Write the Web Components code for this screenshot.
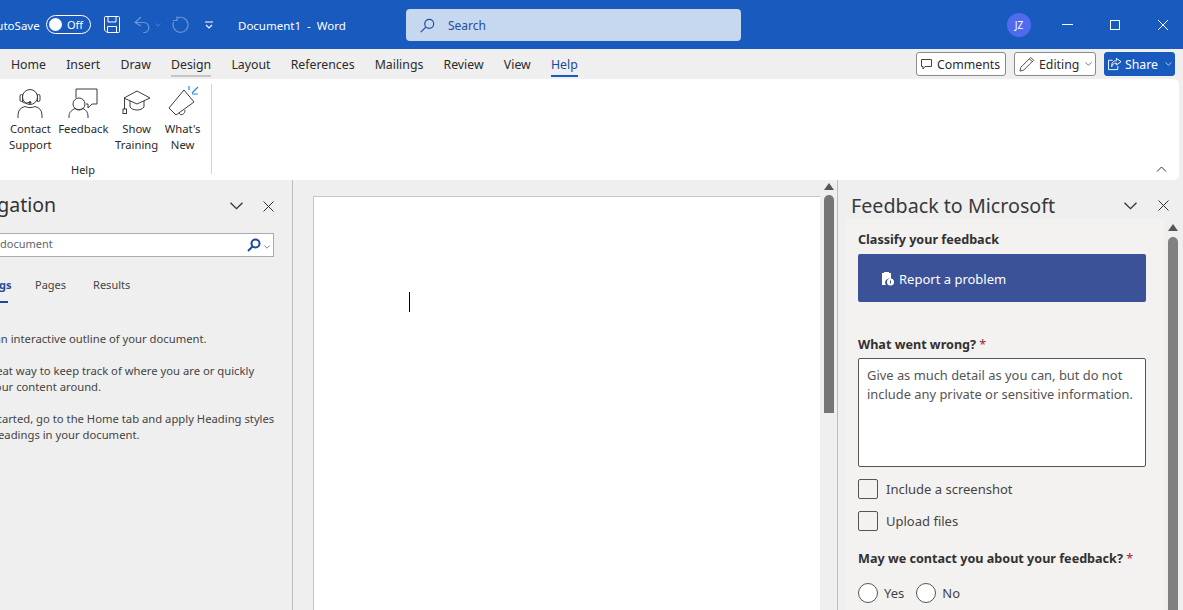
<!DOCTYPE html>
<html lang="en">
<head>
<meta charset="utf-8">
<title>Document1 - Word</title>
<style>
html, body { margin: 0; height: 610px; overflow: hidden; background: #efefef; }
body { font: 12.5px "Noto Sans", "Open Sans", sans-serif; color: #333; display: flex; flex-direction: column; }
</style>
</head>
<body>
<word-titlebar></word-titlebar>
<word-tabs></word-tabs>
<word-ribbon></word-ribbon>
<word-workspace>
  <nav-pane slot="nav"></nav-pane>
  <doc-area slot="doc"></doc-area>
  <feedback-pane slot="feedback"></feedback-pane>
</word-workspace>
<script>
// small helper so every component gets an open shadow root
class Base extends HTMLElement {
  render(html) {
    this.attachShadow({ mode: 'open' }).innerHTML = html;
  }
}

const chevron = (w, h, color) => `<svg width="${w}" height="${h}" viewBox="0 0 10 6" fill="none" stroke="${color}" stroke-width="1"><path d="M.5.5 5 5 9.500.5"/></svg>`;
const cross = `<svg width="11" height="11" viewBox="0 0 11 11" fill="none" stroke="#333" stroke-width="1"><path d="M.5.5l10 10M10.500.5l-10 10"/></svg>`;

class WordTitlebar extends Base {
  connectedCallback() {
    this.render(`<style>
      :host { display: flex; align-items: center; height: 49px; background: #185abd; color: #fff; font-size: 11.500px; flex: none; box-sizing: border-box; white-space: nowrap; }
      .auto { margin-left: -11px; width: 50px; padding-top: 1px; }
      .toggle { width: 41px; height: 17px; border: 1px solid #fff; border-radius: 10px; display: flex; align-items: center; gap: 5px; padding-left: 2px; box-sizing: content-box; margin-left: 7px; font-size: 11px; }
      .toggle i { width: 13px; height: 13px; border-radius: 50%; background: #fff; }
      .qat { display: flex; align-items: center; margin-left: 13px; }
      .doc { margin-left: 24px; width: 168px; padding-top: 1px; }
      .search { width: 335px; height: 32px; background: #c6d7f0; border-radius: 4px; display: flex; align-items: center; color: #1f4e9c; font-size: 12px; box-sizing: border-box; padding: 1px 0 0 14px; gap: 12px; }
      .right { margin-left: auto; display: flex; align-items: center; }
      .avatar { width: 24px; height: 24px; border-radius: 50%; background: #4f6bed; display: flex; align-items: center; justify-content: center; font-size: 10px; }
    </style>
    <span class="auto">AutoSave</span>
    <span class="toggle"><i></i>Off</span>
    <span class="qat">
      <svg width="16" height="17" viewBox="0 0 16 17" fill="none" stroke="#fff"><path d="M.5 1.500a1 1 0 0 1 1-1h13a1 1 0 0 1 1 1v14a1 1 0 0 1-1 1H3l-2.500-2.500zM4 .5v5.500h8V.5M3.500 16.500v-6h9v6"/></svg>
      <svg style="margin-left:14px" width="16" height="17" viewBox="0 0 16 17" fill="none" stroke="#6a95d8" stroke-width="1.200"><path d="M7 1 1 6.500 7 10M1 6.500H9.500a5.200 5.200 0 0 1 3 9.500L9 17"/></svg>
      <span style="margin-left:5px;display:flex">${chevron(6, 4, '#7ea3dc')}</span>
      <svg style="margin-left:11px" width="17" height="17" viewBox="0 0 17 17" fill="none" stroke="#6a95d8" stroke-width="1.200"><path d="M5 2.200A7.500 7.500 0 1 1 1.600 6M5 .5v4H1"/></svg>
      <svg style="margin-left:15px" width="10" height="8" viewBox="0 0 10 8" fill="none" stroke="#fff" stroke-width="1.100"><path d="M1 1h8M2 4l3 3 3-3"/></svg>
    </span>
    <span class="doc">Document1&nbsp; -&nbsp; Word</span>
    <span class="search">
      <svg width="15" height="15" viewBox="0 0 15 15" fill="none" stroke="#1f4e9c" stroke-width="1.200"><circle cx="9.200" cy="5.800" r="4.500"/><path d="M5.800 9.200.8 14.200"/></svg>
      <span style="margin-left:1px">Search</span>
    </span>
    <span class="right">
      <span class="avatar">JZ</span>
      <svg style="margin-left:31px" width="11" height="1"><rect width="11" height="1" fill="#fff"/></svg>
      <svg style="margin-left:37px" width="10" height="10" fill="none" stroke="#fff"><rect x=".5" y=".5" width="9" height="9"/></svg>
      <svg style="margin-left:38px;margin-right:15px" width="10" height="10" viewBox="0 0 10 10" fill="none" stroke="#fff"><path d="M0 0l10 10M10 0 0 10"/></svg>
    </span>`);
  }
}

class WordTabs extends Base {
  connectedCallback() {
    const tabs = ['Home', 'Insert', 'Draw', 'Design', 'Layout', 'References', 'Mailings', 'Review', 'View', 'Help'];
    this.render(`<style>
      :host { display: flex; align-items: center; height: 30px; flex: none; padding: 0 8px 0 11px; font-size: 12.300px; color: #2b2b2b; white-space: nowrap; }
      .tabs { display: flex; gap: 20.200px; padding-top: 1px; }
      .tab { position: relative; padding: 0 0 1px; }
      .tab.hover::after, .tab.on::after { content: ''; position: absolute; left: 0; right: 0; bottom: -3px; height: 2px; background: #c6c6c6; }
      .tab.on { color: #1a4a9a; }
      .tab.on::after { background: #185abd; }
      .acts { margin-left: auto; display: flex; gap: 8px; }
      .btn { height: 24px; box-sizing: border-box; border: 1px solid #8a8a8a; border-radius: 3px; background: #fff; display: flex; align-items: center; gap: 4px; padding: 0 0 0 4px; }
      .btn svg { flex: none; }
      .btn.share { background: #185abd; border-color: #185abd; color: #fff; gap: 3px; padding-left: 3px; }
    </style>
    <div class="tabs">${tabs.map(t => `<span class="tab ${t === 'Design' ? 'hover' : ''} ${t === 'Help' ? 'on' : ''}">${t}</span>`).join('')}</div>
    <div class="acts">
      <span class="btn" style="width:90px;gap:5px"><svg width="11" height="11" viewBox="0 0 11 11" fill="none" stroke="#444"><path d="M.5.5h10v7H4l-2 2.500V7.500H.5z"/></svg>Comments</span>
      <span class="btn" style="width:82px"><svg width="16" height="16" viewBox="0 0 17 17" fill="none" stroke="#444"><path d="M12.500 1.500l3 3L5 15l-4 1 1-4zM11 3l3 3"/></svg>Editing<span style="display:flex;margin-left:2px">${chevron(7, 4, '#333')}</span></span>
      <span class="btn share" style="width:71px"><svg width="14" height="14" viewBox="0 0 15 14" fill="none" stroke="#fff"><path d="M9 1l5 3.500L9 8V6C6 6 4.500 7.500 4 10c-.5-4 1.500-6.500 5-6.500zM5 3H.5v10h10V9"/></svg>Share<span style="display:flex;margin-left:4px">${chevron(7, 4, '#fff')}</span></span>
    </div>`);
  }
}

class RibbonButton extends Base {
  connectedCallback() {
    this.render(`<style>
      :host { display: flex; flex-direction: column; align-items: center; text-align: center; line-height: 16px; font-size: 11.300px; color: #2b2b2b; white-space: pre-line; }
      .ic { height: 34px; margin-bottom: 3px; display: flex; align-items: flex-end; }
    </style><div class="ic"><slot name="icon"></slot></div><slot></slot>`);
  }
}

class WordRibbon extends Base {
  connectedCallback() {
    this.render(`<style>
      :host { display: flex; height: 101px; margin-right: 4px; background: #fff; border-radius: 0 5px 5px 0; flex: none; position: relative; }
      .group { width: 212px; box-sizing: border-box; border-right: 1px solid #d4d4d4; margin: 5px 0 6px; display: flex; flex-direction: column; }
      .btns { display: flex; justify-content: space-between; padding: 0 10.500px 0 9px; height: 76px; flex: none; }
      .lbl { text-align: center; font-size: 11px; color: #2b2b2b; margin-top: 1.500px; padding-right: 45px; }
      .collapse { position: absolute; right: 12px; bottom: 8px; display: flex; transform: scaleY(-1); }
    </style>
    <div class="group">
      <div class="btns">
        <ribbon-button>
          <svg slot="icon" width="26" height="30" viewBox="0 0 26 30" fill="none" stroke="#3c3c3c"><circle cx="13" cy="9" r="7.500"/><path d="M5.500 6.500h-1a1.500 1.500 0 0 0-1.500 1.500v4a1.500 1.500 0 0 0 1.500 1.500h1zM20.500 6.500h1A1.500 1.500 0 0 1 23 8v4a1.500 1.500 0 0 1-1.500 1.500h-1zM5 13.500c1 1.500 4 2 7 1"/><circle cx="13" cy="14.500" r="1" fill="#3c3c3c"/><path d="M1 30v-3a9 9 0 0 1 7-8.500c3 1.500 7 1.500 10 0a9 9 0 0 1 7 8.500v3"/></svg>Contact
Support</ribbon-button>
        <ribbon-button>
          <svg slot="icon" width="30" height="30" viewBox="0 0 30 30" fill="none" stroke="#3c3c3c"><path d="M8 10V1h21v15h-5l-4 4v-4h-2"/><circle cx="11" cy="16" r="6" fill="#fff"/><path d="M1 30v-2c0-4 3-6 6-7.500 2.500 1.500 5.500 1.500 8 0 3 1.500 5 3.500 5 7.500v2"/></svg>Feedback</ribbon-button>
        <ribbon-button>
          <svg slot="icon" width="29" height="26" viewBox="0 0 29 26" fill="none" stroke="#3c3c3c" style="margin-bottom:2px"><path d="M15 1 28 8 15 14 2 8zM8 11v6c3 4 11 4 14 0v-6M2.500 8v11"/><rect x="1" y="19" width="3.500" height="4.500"/></svg>Show
Training</ribbon-button>
        <ribbon-button>
          <svg slot="icon" width="32" height="33" viewBox="0 0 32 33" fill="none" stroke="#3c3c3c"><path d="M2 23 17 5l10 12-18 13zM12 28c1 3 6 2 6-3"/><path d="M25 8l6-6M25 9h6M22 1v4" stroke="#1a8fe3" stroke-width="1.200"/></svg>What's
New</ribbon-button>
      </div>
      <div class="lbl">Help</div>
    </div>
    <span class="collapse">${chevron(11, 6, '#333')}</span>`);
  }
}

class WordWorkspace extends Base {
  connectedCallback() {
    this.render(`<style>
      :host { display: flex; flex: 1; min-height: 0; overflow: hidden; }
    </style><slot name="nav"></slot><slot name="doc"></slot><slot name="feedback"></slot>`);
  }
}

class NavPane extends Base {
  connectedCallback() {
    this.render(`<style>
      :host { display: flex; flex-direction: column; width: 293px; box-sizing: border-box; border-right: 1px solid #bdbdbd; flex: none; overflow: hidden; white-space: nowrap; color: #444; font-size: 11.250px; }
      .head { display: flex; align-items: center; height: 52px; font-size: 19.500px; color: #333; }
      .head b { font-weight: 400; margin: -3px 0 0 -43.500px; }
      .ctl { margin-left: auto; display: flex; align-items: center; gap: 19px; margin-right: 18px; }
      .search { height: 24px; margin: 1px 18px 0 0; box-sizing: border-box; border: 1px solid #ababab; border-left: 0; background: #fff; display: flex; align-items: center; color: #666; padding: 0 3px 4px 0; font-size: 11px; }
      .search svg:first-of-type { margin: 4px 0 0 auto; }
      .tabs { display: flex; gap: 27px; margin: 20px 0 0; height: 31px; font-size: 11px; }
      .tabs span { position: relative; height: 26px; }
      .tabs .on { margin-left: -40px; width: 48px; box-sizing: border-box; padding-right: 4px; text-align: right; color: #1a4a9a; font-weight: 700; }
      .tabs .on::after { content: ''; position: absolute; left: 0; right: 0; bottom: 0; height: 2px; background: #1a4a9a; }
      p { margin: 0 0 16px; line-height: 16px; }
      .body { margin: 23px 0 0 -43px; }
    </style>
    <div class="head"><b>Navigation</b>
      <span class="ctl">${chevron(15, 8, '#333')}${cross}</span>
    </div>
    <div class="search"><span>document</span>
      <svg width="14" height="14" viewBox="0 0 14 14" fill="none" stroke="#1a4a9a" stroke-width="2"><circle cx="8.500" cy="5.500" r="4"/><path d="M5.500 8.500 1 13"/></svg>
      <span style="display:flex;margin:4px 0 0 3px">${chevron(6, 4, '#333')}</span>
    </div>
    <div class="tabs"><span class="on">Headings</span><span>Pages</span><span>Results</span></div>
    <div class="body">
      <p>Create an interactive outline of your document.</p>
      <p>It's a great way to keep track of where you are or quickly<br>move your content around.</p>
      <p>To get started, go to the Home tab and apply Heading styles<br>to the headings in your document.</p>
    </div>`);
  }
}

class DocArea extends Base {
  connectedCallback() {
    this.render(`<style>
      :host { display: flex; width: 544px; flex: none; padding-left: 20px; box-sizing: border-box; }
      .page { flex: 1; margin-top: 16px; background: #fff; border: 1px solid #c6c6c6; border-right: 0; border-bottom: 0; padding: 95px 0 0 95px; }
      .caret { width: 1px; height: 20px; background: #000; }
      word-scroll { width: 17px; }
    </style>
    <div class="page"><div class="caret"></div></div>
    <word-scroll style="--thumb:#767676;--top:3px;--h:218px;--gap:5px"></word-scroll>`);
  }
}

class WordScroll extends Base {
  connectedCallback() {
    this.render(`<style>
      :host { display: flex; flex-direction: column; align-items: center; flex: none; padding-top: var(--top); box-sizing: border-box; }
      .up { width: 0; height: 0; border: 5px solid transparent; border-top: 0; border-bottom: 7px solid #555; margin-bottom: var(--gap); }
      .thumb { width: 10px; height: var(--h); background: var(--thumb); border-radius: 5px 5px 0 0; flex: none; }
    </style><div class="up"></div><div class="thumb"></div>`);
  }
}

class FormField extends Base {
  connectedCallback() {
    const round = this.hasAttribute('round');
    this.render(`<style>
      :host { display: inline-flex; align-items: center; gap: ${round ? 6 : 8}px; font-size: 13px; color: #444; }
      i { width: 18px; height: 18px; border: 1px solid #555; background: ${round ? '#fff' : 'transparent'}; border-radius: ${round ? '50%' : '2px'}; }
    </style><i></i><slot></slot>`);
  }
}

class FeedbackPane extends Base {
  connectedCallback() {
    this.render(`<style>
      :host { display: flex; flex-direction: column; flex: 1; min-width: 0; border-left: 1px solid #bdbdbd; box-sizing: border-box; white-space: nowrap; color: #3a3a3a; }
      .head { display: flex; align-items: center; height: 39px; padding: 12px 14px 0 13px; box-sizing: border-box; font-size: 19.700px; }
      .ctl { margin-left: auto; display: flex; align-items: center; gap: 20px; }
      .wrap { display: flex; flex: 1; padding-left: 8px; min-height: 0; }
      .form { width: 318px; box-sizing: border-box; background: #f3f2f1; padding: 13px 0 0 12px; font-size: 13px; flex: none; }
      h3 { margin: 0; font-size: 12.600px; font-weight: 700; line-height: 16px; color: #323130; }
      .report { width: 288px; height: 48px; margin-top: 6px; background: #3b5198; border-radius: 2px; color: #fff; display: flex; align-items: center; padding: 1px 0 0 23px; gap: 5px; box-sizing: border-box; }
      .req { color: #a4262c; font-weight: 400; }
      .ta { width: 288px; height: 109px; box-sizing: border-box; margin-top: 5px; background: #fff; border: 1px solid #555; border-radius: 2px; padding: 7px 8px; line-height: 19px; color: #555; font-size: 12.900px; }
      .checks { display: flex; flex-direction: column; gap: 12px; margin-top: 12px; }
      .radios { display: flex; gap: 12px; margin-top: 16px; }
      word-scroll { width: 11px; margin-left: 3px; }
    </style>
    <div class="head"><span>Feedback to Microsoft</span><span class="ctl">${chevron(15, 8, '#333')}${cross}</span></div>
    <div class="wrap">
      <div class="form">
        <h3>Classify your feedback</h3>
        <div class="report">
          <svg width="13" height="15" viewBox="0 0 13 15"><path d="M1 2h2V1h5v1h2v6a4 4 0 0 0-5 6H1z" fill="#fff"/><circle cx="9.500" cy="11" r="3.500" fill="#fff"/><path d="M9.500 9.500V12.500" stroke="#3b5198"/></svg>
          Report a problem
        </div>
        <h3 style="margin-top:35px">What went wrong? <span class="req">*</span></h3>
        <div class="ta">Give as much detail as you can, but do not<br>include any private or sensitive information.</div>
        <div class="checks">
          <form-field>Include a screenshot</form-field>
          <form-field>Upload files</form-field>
        </div>
        <h3 style="margin-top:20px">May we contact you about your feedback? <span class="req">*</span></h3>
        <div class="radios"><form-field round>Yes</form-field><form-field round>No</form-field></div>
      </div>
      <word-scroll style="--thumb:#808080;--top:5px;--h:380px;--gap:6px"></word-scroll>
    </div>`);
  }
}

customElements.define('word-titlebar', WordTitlebar);
customElements.define('word-tabs', WordTabs);
customElements.define('ribbon-button', RibbonButton);
customElements.define('word-ribbon', WordRibbon);
customElements.define('word-workspace', WordWorkspace);
customElements.define('word-scroll', WordScroll);
customElements.define('nav-pane', NavPane);
customElements.define('doc-area', DocArea);
customElements.define('form-field', FormField);
customElements.define('feedback-pane', FeedbackPane);
</script>
</body>
</html>
